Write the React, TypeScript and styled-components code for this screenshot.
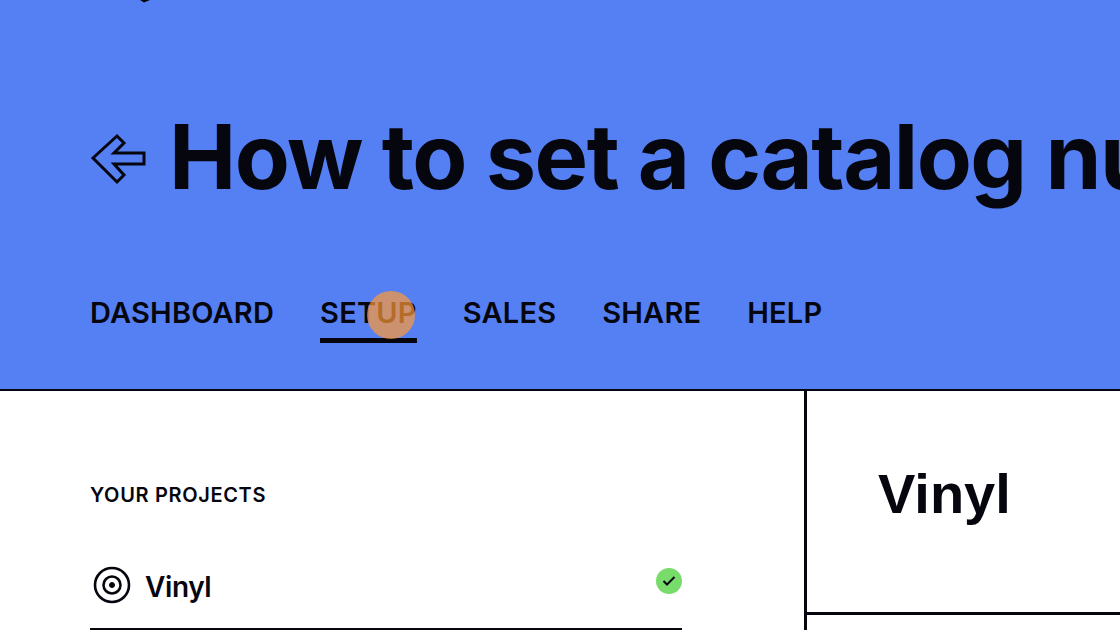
import React from 'react'
import styled, { createGlobalStyle } from 'styled-components'

const Global = createGlobalStyle`
  html, body { margin: 0; padding: 0; background: #fff; }
  body { width: 1120px; height: 630px; overflow: hidden; font-family: Inter, "Liberation Sans", sans-serif; color: #06060f; }
`

const Page = styled.div`
  position: relative;
  width: 1120px;
  height: 630px;
  overflow: hidden;
`

const Header = styled.header`
  height: 389px;
  box-sizing: border-box;
  background: #5580f4;
  padding-left: 90px;
  display: flex;
  flex-direction: column;
`

const LogoSliver = styled.svg`
  display: block;
  flex-shrink: 0;
  margin-left: 50px;
`

const TitleRow = styled.div`
  display: flex;
  align-items: center;
  gap: 21px;
  margin-top: 98px;
  height: 112px;
  white-space: nowrap;
`

const BackArrow = styled.svg`
  flex-shrink: 0;
  margin-top: 4px;
`

const Title = styled.h1`
  margin: 0;
  font-size: 90px;
  font-weight: 650;
  letter-spacing: -1.55px;
  line-height: 112px;
`

const Tabs = styled.nav`
  display: flex;
  gap: 46px;
  margin-top: 83px;
`

const Tab = styled.a<{ $active?: boolean }>`
  font-size: 29px;
  font-weight: 600;
  line-height: 34px;
  letter-spacing: 0.2px;
  padding-bottom: 8px;
  border-bottom: 5px solid ${p => (p.$active ? '#06060f' : 'transparent')};
`

const Cursor = styled.div`
  position: absolute;
  left: 367px;
  top: 291px;
  width: 48px;
  height: 48px;
  border-radius: 50%;
  background: rgba(255, 152, 53, 0.7);
`

const Body = styled.div`
  display: grid;
  grid-template-columns: 807px 1fr;
  border-top: 2px solid #06060f;
`

const Sidebar = styled.aside`
  padding: 92px 122px 0 90px;
  border-right: 3px solid #06060f;
  height: 300px;
`

const SideLabel = styled.div`
  font-size: 20px;
  font-weight: 600;
  line-height: 24px;
  letter-spacing: 0.65px;
`

const ProjectRow = styled.div`
  display: flex;
  align-items: center;
  height: 74px;
  padding-top: 24px;
  margin-top: 23px;
  border-bottom: 2px solid #06060f;
`

const DiscIcon = styled.svg`
  flex-shrink: 0;
  margin-top: -12px;
`

const ProjectName = styled.span`
  font-size: 28px;
  font-weight: 600;
  letter-spacing: -0.4px;
  margin: -8px 0 0 11px;
  flex: 1;
`

const Check = styled.span`
  width: 26px;
  height: 26px;
  border-radius: 50%;
  background: #78dc6a;
  display: flex;
  align-items: center;
  justify-content: center;
  margin-top: -20px;
`

const PanelHead = styled.div`
  height: 224px;
  box-sizing: border-box;
  padding: 68px 0 0 71px;
  border-bottom: 3px solid #06060f;
`

const PanelTitle = styled.h2`
  margin: 0;
  font-family: "Liberation Sans", Arial, sans-serif;
  font-size: 56px;
  font-weight: 700;
  line-height: 70px;
`

export default function App() {
  return (
    <Page>
      <Global />
      <Header>
        <LogoSliver width="10" height="3" viewBox="0 0 10 3">
          <path d="M0 0 L4 2.5 L10 0 Z" fill="#06060f" />
        </LogoSliver>
        <TitleRow>
          <BackArrow width="58" height="52" viewBox="0 0 58 52" fill="none" stroke="#06060f" strokeWidth="3">
            <path d="M3 25 L27 3 L34 10 L24 20 L54 20 L54 31 L24 31 L34 42 L27 49 Z" />
          </BackArrow>
          <Title>How to set a catalog number</Title>
        </TitleRow>
        <Tabs>
          <Tab>DASHBOARD</Tab>
          <Tab $active>SETUP</Tab>
          <Tab>SALES</Tab>
          <Tab>SHARE</Tab>
          <Tab>HELP</Tab>
        </Tabs>
      </Header>
      <Cursor />
      <Body>
        <Sidebar>
          <SideLabel>YOUR PROJECTS</SideLabel>
          <ProjectRow>
            <DiscIcon width="44" height="40" viewBox="0 0 44 40" fill="none" stroke="#06060f" strokeWidth="2.6">
              <circle cx="22" cy="20" r="17" />
              <circle cx="22" cy="20" r="8.5" />
              <circle cx="22" cy="20" r="2.5" fill="#06060f" strokeWidth="1" />
            </DiscIcon>
            <ProjectName>Vinyl</ProjectName>
            <Check>
              <svg width="14" height="12" viewBox="0 0 14 12" fill="none" stroke="#06060f" strokeWidth="2">
                <path d="M1.5 6 L5 9.5 L12.5 2" />
              </svg>
            </Check>
          </ProjectRow>
        </Sidebar>
        <section>
          <PanelHead>
            <PanelTitle>Vinyl</PanelTitle>
          </PanelHead>
        </section>
      </Body>
    </Page>
  )
}
